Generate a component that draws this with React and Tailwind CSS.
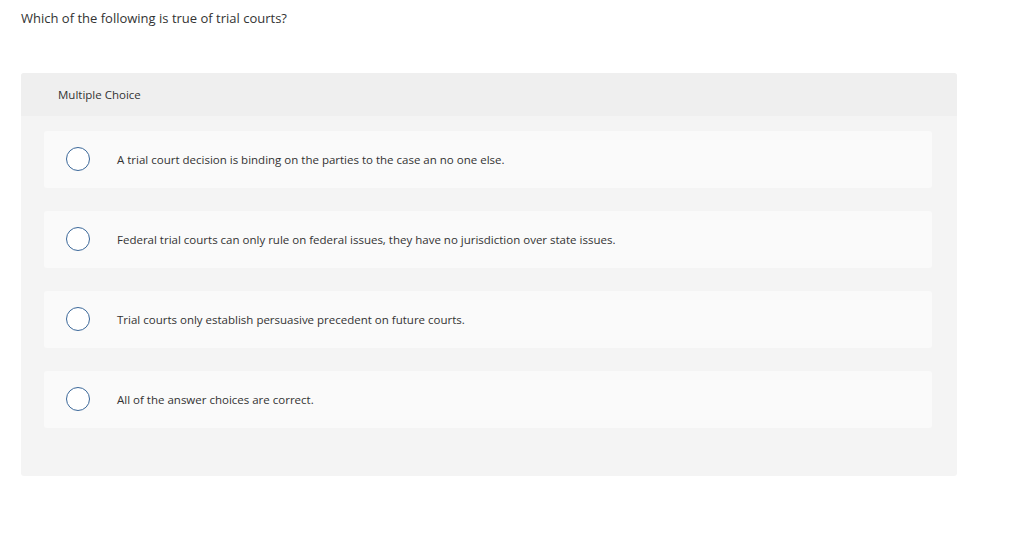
import React from "react";

const options = [
  "A trial court decision is binding on the parties to the case an no one else.",
  "Federal trial courts can only rule on federal issues, they have no jurisdiction over state issues.",
  "Trial courts only establish persuasive precedent on future courts.",
  "All of the answer choices are correct.",
];

export default function App() {
  return (
    <div className="w-[1024px] h-[537px] bg-white text-[#333] overflow-hidden" style={{ fontFamily: "'Open Sans', Lato, sans-serif" }}>
      <div className="pl-[21px] pt-[9px] text-[13px] leading-[18px] text-[#333]">
        Which of the following is true of trial courts?
      </div>
      <div className="ml-[21px] mt-[46px] w-[936px] h-[403px] rounded-[3px] bg-[#f4f4f4] overflow-hidden">
        <div className="h-[43px] bg-[#efefef] pl-[37px] pt-[1px] flex items-center text-[11.5px] text-[#333]">
          Multiple Choice
        </div>
        <div className="pt-[14.5px] pl-[23px] flex flex-col gap-[23px]">
          {options.map((t, i) => (
            <div key={i} className="w-[888px] h-[57px] rounded-[3px] bg-[#fafafa] flex items-center">
              <div className="ml-[22px] w-[24px] h-[24px] rounded-full border border-[#3a6799] bg-white shrink-0" />
              <div className="ml-[27px] pt-[1px] text-[11.5px] text-[#333]">{t}</div>
            </div>
          ))}
        </div>
      </div>
    </div>
  );
}
